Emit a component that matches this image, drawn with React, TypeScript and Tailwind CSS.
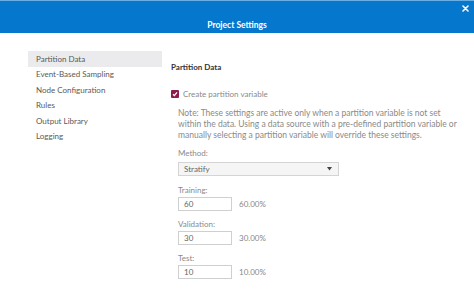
import React from "react";

const navItems = [
  "Partition Data",
  "Event-Based Sampling",
  "Node Configuration",
  "Rules",
  "Output Library",
  "Logging",
];

function NumField({ label, value, pct }: { label: string; value: string; pct: string }) {
  return (
    <div className="flex flex-col">
      <div className="h-[11px] leading-[11px]">{label}</div>
      <div className="flex items-center mt-[1px]">
        <div className="w-[54px] h-[14px] border border-[#cfcfcf] bg-white pl-[5px] leading-[12px] text-[#666]">
          {value}
        </div>
        <div className="ml-[7px] text-[#888]">{pct}</div>
      </div>
    </div>
  );
}

export default function App() {
  return (
    <div
      className="w-[474px] h-[297px] bg-white overflow-hidden flex flex-col text-[8px]"
      style={{ fontFamily: "Lato, 'Open Sans', sans-serif" }}
    >
      <div className="h-[33px] bg-[#0577cc] border-t border-[#6aaee6] flex flex-col">
        <div className="h-[14px] flex justify-end items-center pr-[5px]">
          <svg width="7" height="7" viewBox="0 0 7 7">
            <path d="M1 1L6 6M6 1L1 6" stroke="white" strokeWidth="1.6" strokeLinecap="round" />
          </svg>
        </div>
        <div className="flex-1 flex items-center justify-center text-white font-bold text-[8.5px] pt-[2px]">
          Project Settings
        </div>
      </div>
      <div className="flex pt-[18px]">
        <div className="ml-[28px] w-[134px] flex flex-col text-[#5a5a5a]">
          {navItems.map((n, i) => (
            <div
              key={n}
              className={
                "h-[15.5px] flex items-center pl-[8px] " + (i === 0 ? "bg-[#ebebed]" : "")
              }
            >
              {n}
            </div>
          ))}
        </div>
        <div className="ml-[9px] flex flex-col text-[#8a8a8a]">
          <div className="mt-[11px] h-[10px] leading-[10px] font-bold text-[#333]">Partition Data</div>
          <div className="mt-[16px] flex items-center h-[12px]">
            <div className="w-[8px] h-[8px] bg-[#8c1d4e] rounded-[1px] flex items-center justify-center">
              <svg width="6" height="6" viewBox="0 0 6 6">
                <path d="M1 3.2L2.4 4.6L5 1.4" stroke="white" strokeWidth="1.3" fill="none" />
              </svg>
            </div>
            <div className="ml-[4px]">Create partition variable</div>
          </div>
          <div className="ml-[7px] flex flex-col">
            <div className="mt-[8px] leading-[11px] whitespace-nowrap text-[8.5px]">
              Note: These settings are active only when a partition variable is not set
              <br />
              within the data. Using a data source with a pre-defined partition variable or
              <br />
              manually selecting a partition variable will override these settings.
            </div>
            <div className="mt-[6px] h-[12px] leading-[12px]">Method:</div>
            <div className="mt-[3px] w-[161px] h-[14px] border border-[#d4d4d4] bg-[#f5f5f5] flex items-center justify-between pl-[5px] pr-[6px] text-[#666]">
              <span>Stratify</span>
              <svg width="5" height="4" viewBox="0 0 5 4">
                <path d="M0 0H5L2.5 3.5Z" fill="#444" />
              </svg>
            </div>
            <div className="mt-[9px] flex flex-col gap-[8px]">
              <NumField label="Training:" value="60" pct="60.00%" />
              <NumField label="Validation:" value="30" pct="30.00%" />
              <NumField label="Test:" value="10" pct="10.00%" />
            </div>
          </div>
        </div>
      </div>
    </div>
  );
}
